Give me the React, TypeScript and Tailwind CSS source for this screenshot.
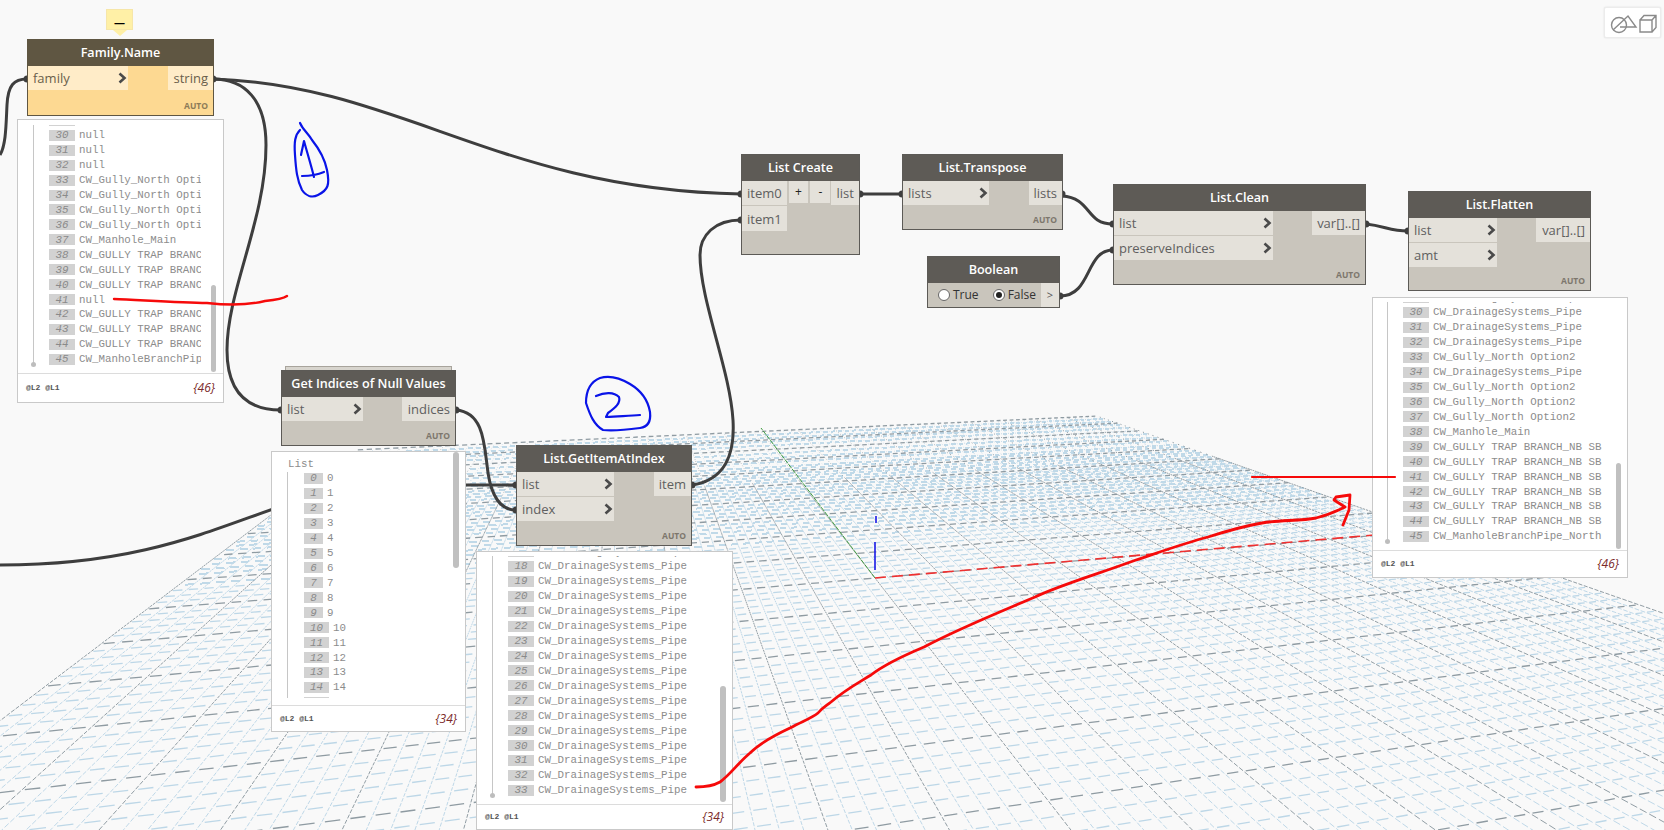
import React, { useMemo } from "react";

const K1 = 0.00334;
const K2 = 0.01616;
const project = (a: number, b: number): [number, number] | null => {
  const w = 1 + a * K1 + b * K2;
  if (w <= 0.01) return null;
  const x = (875 + a * K1 * 4734 + b * K2 * 620) / w;
  const y = (578 + (w - 1) * 250) / w;
  return [x, y];
};
const seg = (out: string[], p: [number, number] | null, q: [number, number] | null) => {
  if (!p || !q) return;
  if (Math.max(p[0], q[0]) < 0 || Math.min(p[0], q[0]) > 1664) return;
  if (Math.max(p[1], q[1]) < 0 || Math.min(p[1], q[1]) > 830) return;
  out.push(`M${p[0].toFixed(1)} ${p[1].toFixed(1)}L${q[0].toFixed(1)} ${q[1].toFixed(1)}`);
};

function buildGrid() {
  const lightR: string[] = [];
  const farR: string[] = [];
  const lightG: string[] = [];
  const darkR: string[] = [];
  const darkG: string[] = [];
  for (let b = -50; b <= 50; b++) {
    const major = b % 5 === 0;
    if (!major && b > 32 && b % 2 !== 0) continue;
    for (let a = -50; a < 50; a++) {
      const shift = b > 8 && b % 2 !== 0 ? 0.3 : 0;
      seg(major ? darkR : b > 8 ? farR : lightR, project(a + 0.12 + shift, b), project(a + 0.72 + shift, b));
    }
  }
  for (let a = -50; a <= 50; a++) {
    const major = a % 5 === 0;
    for (let b = -50; b < 50; b++) {
      for (let d = 0; d < 3; d++) {
        if (b > 25 && d !== 0) continue;
        seg(major ? darkG : lightG, project(a, b + d / 3 + 0.03), project(a, b + d / 3 + 0.27));
      }
    }
  }
  return {
    lightR: lightR.join(""),
    farR: farR.join(""),
    lightG: lightG.join(""),
    darkR: darkR.join(""),
    darkG: darkG.join(""),
  };
}

function Grid() {
  const g = useMemo(buildGrid, []);
  return (
    <svg className="absolute inset-0" width={1664} height={830} viewBox="0 0 1664 830">
      <path d={g.lightG} stroke="#bfd8e8" strokeWidth={1} fill="none" />
      <path d={g.lightR} stroke="#bdd7e7" strokeWidth={1.3} fill="none" />
      <path d={g.farR} stroke="#c0d9e8" strokeWidth={2} fill="none" shapeRendering="crispEdges" />
      <path d={g.darkG} stroke="#929ea5" strokeWidth={1} fill="none" />
      <path d={g.darkR} stroke="#8f9ba2" strokeWidth={1.3} fill="none" />
      <path d="M875 578L761 428" stroke="#3f9a3f" strokeWidth={1} fill="none" strokeDasharray="5 1" />
      <path d="M875 578L1374 535" stroke="#f03030" strokeWidth={1.6} fill="none" strokeDasharray="11 6" />
      <path d="M875 570V542M876 523V516" stroke="#1a1ae6" strokeWidth={1.6} fill="none" />
    </svg>
  );
}

function Wires() {
  const wires = [
    "M27 79C14 79 8 85 7 105C6 125 6 145 0 155",
    "M213 79C400 85 500 190 741 194",
    "M213 79C245 79 266 100 266 145C266 220 227 290 227 350C227 395 250 410 281 410",
    "M0 565C150 565 220 525 300 500L400 485L516 485",
    "M456 410C482 412 484 440 487 465C490 495 500 510 516 510",
    "M692 485C725 480 735 455 733 420C730 370 700 300 700 255C700 235 715 220 741 220",
    "M860 194H902",
    "M1062 196C1092 198 1085 224 1113 224",
    "M1060 296C1092 296 1085 250 1113 250",
    "M1366 224C1385 226 1390 231 1408 231",
  ];
  const dots = [
    [27, 79], [213, 79], [281, 410], [741, 194], [741, 220], [456, 410], [516, 485], [516, 510],
    [692, 485], [860, 194], [902, 194], [1062, 194], [1113, 224], [1113, 250], [1060, 296], [1366, 224], [1408, 231],
  ];
  return (
    <svg className="absolute inset-0" width={1664} height={830} viewBox="0 0 1664 830">
      {wires.map((d, i) => (
        <path key={i} d={d} stroke="#3e3e3e" strokeWidth={3} fill="none" />
      ))}
      {dots.map(([x, y], i) => (
        <circle key={i} cx={x} cy={y} r={3.5} fill="#3e3e3e" />
      ))}
    </svg>
  );
}

function Annotations() {
  return (
    <svg className="absolute inset-0 pointer-events-none" width={1664} height={830} viewBox="0 0 1664 830">
      <g stroke="#0a14e8" strokeWidth={2.2} fill="none" strokeLinecap="round" strokeLinejoin="round">
        <path d="M300 123C303 130 308 133 312 140C320 150 325 160 327 170C330 185 328 190 318 195C312 198 306 196 302 190C297 180 296 170 295 155C294 142 295 135 300 130" />
        <path d="M301 155C302 150 303 146 304 141C307 152 311 165 314 177M302 176C309 176 317 175 324 172" />
        <path d="M586 403C586 392 590 382 600 378C610 375 620 378 630 384C640 390 648 400 650 412C651 421 648 427 640 428C625 430 612 431 603 430C594 425 590 415 586 403Z" />
        <path d="M596 396C605 392 614 392 619 397C621 403 615 408 608 413L606 417C620 416 630 416 640 415" />
      </g>
      <g stroke="#f60a0a" fill="none" strokeLinecap="round" strokeLinejoin="round">
        <path strokeWidth={2.4} d="M114 299C140 300 180 303 207 303C225 305 245 306 265 301C275 300 283 299 287 296" />
        <path strokeWidth={2.2} d="M1252 477H1395" />
        <path
          strokeWidth={2.8}
          d="M696 787C705 787 713 786 720 782C730 775 738 763 750 753C760 743 775 735 790 728C803 721 812 718 818 713C822 708 826 706 831 702C845 690 858 683 871 675C885 664 905 655 924 647C960 628 1000 612 1035 597C1060 585 1095 575 1136 560C1160 552 1185 543 1208 537C1230 530 1245 526 1262 523C1280 520 1300 521 1316 518C1328 515 1337 511 1345 507L1334 500L1336 497L1350 495L1349 510L1343 525"
        />
      </g>
    </svg>
  );
}

function Chevron() {
  return (
    <svg width={9} height={12} viewBox="0 0 9 12" className="shrink-0">
      <path d="M1.5 1.5L6.5 6L1.5 10.5" stroke="#4a4a4a" strokeWidth={2.6} fill="none" strokeLinejoin="miter" />
    </svg>
  );
}

function InPort({ label, width, tone }: { label: string; width: string; tone?: string }) {
  return (
    <div className={`flex h-[24px] items-center justify-between pl-[5px] pr-[1px] ${width} ${tone ?? "bg-[#e4e1da] text-[#5f5f5f]"}`}>
      <span>{label}</span>
      <Chevron />
    </div>
  );
}

function Auto({ tone }: { tone?: string }) {
  return (
    <span className={`absolute bottom-[3px] right-[5px] text-[8.5px] leading-[12px] font-bold ${tone ?? "text-[#7d776c]"}`}>AUTO</span>
  );
}

function Header({ title, tone, pad }: { title: string; tone?: string; pad?: string }) {
  return (
    <div className={`flex h-[26px] shrink-0 items-center justify-center text-[12.6px] font-semibold text-white ${tone ?? "bg-[#5e5b56]"} ${pad ?? ""}`}>
      {title}
    </div>
  );
}

const nodeBase =
  "absolute flex flex-col border border-[#5c5a56] bg-[#c9c5bc] text-[13px] leading-[20px] font-['Open_Sans',sans-serif]";

function FamilyName() {
  return (
    <div className={`${nodeBase} left-[27px] top-[39px] h-[77px] w-[187px] !bg-[#fdd992] border-[#5f5642]`}>
      <Header title="Family.Name" tone="bg-[#5f5642]" />
      <div className="flex justify-between">
        <InPort label="family" width="w-[100px]" tone="bg-[#ffecc8] text-[#6a5f4c]" />
        <div className="flex h-[24px] w-[45px] items-center justify-end bg-[#ffecc8] pr-[5px] text-[#6a5f4c]">string</div>
      </div>
      <Auto tone="text-[#8d7c58]" />
    </div>
  );
}

function GetIndices() {
  return (
    <>
      <div className="absolute left-[285px] top-[366px] h-[6px] w-[167px] border border-[#a8a49c] bg-[#d8d5ce]" />
      <div className={`${nodeBase} left-[281px] top-[370px] h-[76px] w-[175px]`}>
        <Header title="Get Indices of Null Values" />
        <div className="flex justify-between">
          <InPort label="list" width="w-[81px]" />
          <div className="flex h-[24px] w-[53px] items-center justify-end bg-[#e4e1da] pr-[5px] text-[#5f5f5f]">indices</div>
        </div>
        <Auto />
      </div>
    </>
  );
}

function GetItem() {
  return (
    <div className={`${nodeBase} left-[516px] top-[445px] h-[101px] w-[176px]`}>
      <Header title="List.GetItemAtIndex" />
      <div className="flex justify-between">
        <div className="flex flex-col gap-px">
          <InPort label="list" width="w-[97px]" />
          <InPort label="index" width="w-[97px]" />
        </div>
        <div className="flex h-[24px] w-[37px] items-center justify-end bg-[#e4e1da] pr-[5px] text-[#5f5f5f]">item</div>
      </div>
      <Auto />
    </div>
  );
}

function ListCreate() {
  return (
    <div className={`${nodeBase} left-[741px] top-[154px] h-[101px] w-[119px]`}>
      <Header title="List Create" />
      <div className="flex h-[24px] items-stretch text-[#5f5f5f]">
        <div className="flex w-[45px] items-center bg-[#e4e1da] pl-[5px]">item0</div>
        <div className="ml-[2px] flex h-[22px] w-[20px] items-center justify-center bg-[#e4e1da] text-[12px] text-[#222]">+</div>
        <div className="ml-[2px] flex h-[22px] w-[20px] items-center justify-center bg-[#e4e1da] text-[12px] text-[#222]">-</div>
        <div className="ml-[1px] flex w-[28px] items-center justify-center bg-[#e4e1da]">list</div>
      </div>
      <div className="mt-px flex h-[25px] w-[45px] items-center bg-[#e4e1da] pl-[5px] text-[#5f5f5f]">item1</div>
    </div>
  );
}

function Transpose() {
  return (
    <div className={`${nodeBase} left-[902px] top-[154px] h-[76px] w-[161px]`}>
      <Header title="List.Transpose" />
      <div className="flex justify-between">
        <InPort label="lists" width="w-[86px]" />
        <div className="flex h-[24px] w-[33px] items-center justify-end bg-[#e4e1da] pr-[5px] text-[#5f5f5f]">lists</div>
      </div>
      <Auto />
    </div>
  );
}

function ListClean() {
  return (
    <div className={`${nodeBase} left-[1113px] top-[184px] h-[101px] w-[253px]`}>
      <Header title="List.Clean" />
      <div className="flex justify-between">
        <div className="flex flex-col gap-px">
          <InPort label="list" width="w-[159px]" />
          <InPort label="preserveIndices" width="w-[159px]" />
        </div>
        <div className="flex h-[24px] w-[53px] items-center justify-end bg-[#e4e1da] pr-[5px] text-[#5f5f5f]">var[]..[]</div>
      </div>
      <Auto />
    </div>
  );
}

function ListFlatten() {
  return (
    <div className={`${nodeBase} left-[1408px] top-[191px] h-[100px] w-[183px]`}>
      <Header title="List.Flatten" />
      <div className="flex justify-between">
        <div className="flex flex-col gap-px">
          <InPort label="list" width="w-[88px]" />
          <InPort label="amt" width="w-[88px]" />
        </div>
        <div className="flex h-[24px] w-[54px] items-center justify-end bg-[#e4e1da] pr-[5px] text-[#5f5f5f]">var[]..[]</div>
      </div>
      <Auto />
    </div>
  );
}

function Radio({ on }: { on?: boolean }) {
  return (
    <span className="flex h-[12px] w-[12px] items-center justify-center rounded-full border border-[#666] bg-white">
      {on && <span className="h-[6px] w-[6px] rounded-full bg-[#222]" />}
    </span>
  );
}

function BooleanNode() {
  return (
    <div className={`${nodeBase} left-[927px] top-[256px] h-[52px] w-[133px]`}>
      <Header title="Boolean" />
      <div className="flex h-[24px] items-center justify-between text-[12px] text-[#333]">
        <div className="flex items-center pl-[10px]">
          <Radio />
          <span className="ml-[3px]">True</span>
          <span className="ml-[14px]"><Radio on /></span>
          <span className="ml-[3px]">False</span>
        </div>
        <div className="flex h-full w-[18px] items-center justify-center bg-[#e4e1da] text-[11px] text-[#555]">&gt;</div>
      </div>
    </div>
  );
}

function Row({ i, text, narrow }: { i: number; text: string; narrow?: boolean }) {
  return (
    <div className="flex h-[14.93px] items-center whitespace-nowrap">
      <span className={`flex h-[11px] shrink-0 items-center justify-center bg-[#d2d2d2] italic text-[#8a8a8a] ${narrow ? (i < 10 ? "w-[19px]" : "w-[25px]") : "w-[26px]"}`}>
        {i}
      </span>
      <span className="ml-[4px]">{text}</span>
    </div>
  );
}

const panel =
  "absolute flex flex-col border border-[#c9c9c9] bg-white font-['Liberation_Mono',monospace] text-[10.8px] leading-[14px] text-[#8c8c8c]";

function Footer({ n }: { n: number }) {
  return (
    <div className="flex flex-1 items-center justify-between border-t border-[#dcdcdc] pl-[8px] pr-[8px]">
      <span className="text-[8px] font-bold text-[#555]">@L2 @L1</span>
      <span className="font-['Open_Sans',sans-serif] text-[12px] italic text-[#7c2b2b]">{`{${n}}`}</span>
    </div>
  );
}

function Track({ line, dot }: { line: string; dot?: string }) {
  return (
    <>
      <div className={`absolute w-px bg-[#c6c6c6] ${line}`} />
      {dot && <div className={`absolute h-[5px] w-[5px] rounded-full bg-[#bdbdbd] ${dot}`} />}
    </>
  );
}

const gully = "CW_Gully_North Option2";
const pipe = "CW_DrainageSystems_Pipe";
const trap = "CW_GULLY TRAP BRANCH_NB SB";
const main = "CW_Manhole_Main";
const branch = "CW_ManholeBranchPipe_North";

const w1: string[] = [pipe, "null", "null", "null", gully, gully, gully, gully, main, trap, trap, trap, "null", trap, trap, trap, branch];
const w4: string[] = [pipe, pipe, pipe, pipe, gully, pipe, gully, gully, gully, main, trap, trap, trap, trap, trap, trap, branch];

function WatchOne() {
  return (
    <div className={`${panel} left-[17px] top-[119px] h-[284px] w-[207px]`}>
      <div className="relative h-[253px] shrink-0">
        <Track line="left-[15px] top-[5px] h-[240px]" dot="left-[13px] top-[242px]" />
        <div className="absolute left-[31px] top-[5px] h-[243px] w-[152px] overflow-hidden">
          <div className="-mt-[12px]">
            {w1.map((t, i) => <Row key={i} i={29 + i} text={t} />)}
          </div>
        </div>
        <div className="absolute left-[193px] top-[165px] h-[87px] w-[5px] rounded-full bg-[#c0c0c0]" />
      </div>
      <Footer n={46} />
    </div>
  );
}

function WatchTwo() {
  return (
    <div className={`${panel} left-[271px] top-[451px] h-[281px] w-[195px]`}>
      <div className="relative h-[253px] shrink-0">
        <Track line="left-[15px] top-[20px] h-[226px]" />
        <div className="absolute left-[16px] top-[5px] text-[10.8px] leading-[14px]">List</div>
        <div className="absolute left-[32px] top-[19px] h-[227px] w-[150px] overflow-hidden">
          {Array.from({ length: 16 }, (_, i) => <Row key={i} i={i} text={String(i)} narrow />)}
        </div>
        <div className="absolute left-[181px] top-[0px] h-[116px] w-[6px] rounded-full bg-[#c0c0c0]" />
      </div>
      <Footer n={34} />
    </div>
  );
}

function WatchThree() {
  return (
    <div className={`${panel} left-[476px] top-[551px] h-[279px] w-[257px]`}>
      <div className="relative h-[252px] shrink-0">
        <Track line="left-[15px] top-[4px] h-[239px]" dot="left-[13px] top-[241px]" />
        <div className="absolute left-[31px] top-[4px] h-[242px] w-[215px] overflow-hidden">
          <div className="-mt-[11.9px]">
            {Array.from({ length: 17 }, (_, i) => <Row key={i} i={17 + i} text={pipe} />)}
          </div>
        </div>
        <div className="absolute left-[243px] top-[134px] h-[116px] w-[6px] rounded-full bg-[#c0c0c0]" />
      </div>
      <Footer n={34} />
    </div>
  );
}

function WatchFour() {
  return (
    <div className={`${panel} left-[1372px] top-[297px] h-[281px] w-[256px]`}>
      <div className="relative h-[252px] shrink-0">
        <Track line="left-[14px] top-[4px] h-[239px]" dot="left-[12px] top-[241px]" />
        <div className="absolute left-[30px] top-[4px] h-[242px] w-[215px] overflow-hidden">
          <div className="-mt-[11.9px]">
            {w4.map((t, i) => <Row key={i} i={29 + i} text={t} />)}
          </div>
        </div>
        <div className="absolute left-[243px] top-[165px] h-[86px] w-[5px] rounded-full bg-[#c0c0c0]" />
      </div>
      <Footer n={46} />
    </div>
  );
}

function Tooltip() {
  return (
    <div className="absolute left-[106px] top-[9px] flex flex-col items-center">
      <div className="flex h-[21px] w-[27px] items-end justify-center border border-[#f6e6a8] bg-[#fff0a6] pb-[1px] font-['Open_Sans',sans-serif] text-[11px] leading-[12px] font-bold text-black">
        —
      </div>
      <svg width={14} height={6} viewBox="0 0 14 6">
        <path d="M0 0H14L7 6Z" fill="#fff0a6" />
      </svg>
    </div>
  );
}

function NavWidget() {
  return (
    <div className="absolute right-[3px] top-[7px] flex h-[31px] w-[57px] items-center justify-center rounded-[2px] border border-[#ececec] bg-white shadow-[0_0_2px_rgba(0,0,0,0.12)]">
      <svg width={48} height={22} viewBox="0 0 48 22" fill="none" stroke="#8a8a8a" strokeWidth={1.4}>
        <circle cx={10} cy={13} r={7.5} />
        <path d="M4 18L19 4L27 15H11" />
        <path d="M31 8H43V20H31ZM31 8L35 3.5H47V15.5L43 20M43 8L47 3.5" />
      </svg>
    </div>
  );
}

export default function App() {
  return (
    <div className="relative h-[830px] w-[1664px] overflow-hidden bg-[#f9f9f9]">
      <Grid />
      <Wires />
      <Tooltip />
      <FamilyName />
      <WatchOne />
      <GetIndices />
      <WatchTwo />
      <GetItem />
      <WatchThree />
      <ListCreate />
      <Transpose />
      <BooleanNode />
      <ListClean />
      <ListFlatten />
      <WatchFour />
      <NavWidget />
      <Annotations />
    </div>
  );
}
